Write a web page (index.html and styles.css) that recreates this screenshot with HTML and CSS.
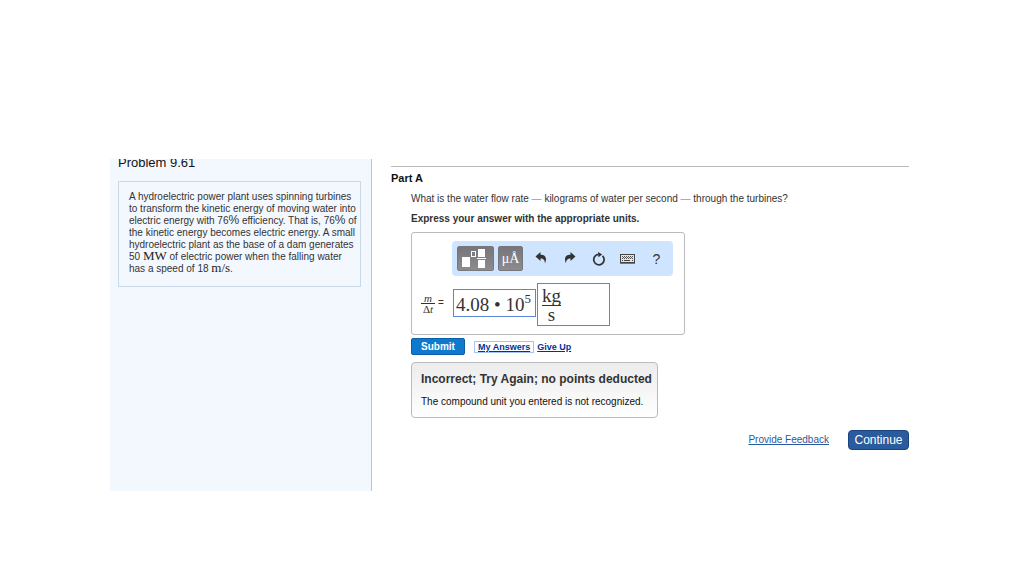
FILE: index.html
```html
<!DOCTYPE html>
<html lang="en">
<head>
  <meta charset="UTF-8">
  <meta name="viewport" content="width=device-width, initial-scale=1.0">
  <title>Problem 9.61</title>
  <link rel="stylesheet" href="styles.css">
</head>
<body>

  <div class="page">
    <!-- Problem statement -->
    <aside class="sidebar">
      <h1>Problem 9.61</h1>
      <div class="problem-text">
        A hydroelectric power plant uses spinning turbines<br>
        to transform the kinetic energy of moving water into<br>
        electric energy with 76<span class="percent">%</span> efficiency. That is, 76<span class="percent">%</span> of<br>
        the kinetic energy becomes electric energy. A small<br>
        hydroelectric plant as the base of a dam generates<br>
        50 <span class="unit">MW</span> of electric power when the falling water<br>
        has a speed of 18 <span class="unit">m/s</span>.
      </div>
    </aside>

    <main class="content">
      <h2>Part A</h2>

      <div class="part">
        <p class="question">What is the water flow rate <span class="dash">—</span> kilograms of water per second <span class="dash">—</span> through the turbines?</p>
        <p class="instructions">Express your answer with the appropriate units.</p>

        <div class="answer-box">
          <div class="toolbar">
            <button type="button" class="tool-btn templates" aria-label="Templates">
              <svg width="29" height="22" viewBox="0 0 29 22">
                <rect x="1" y="9" width="8" height="10" fill="#fff"/>
                <rect x="10.5" y="3.5" width="4" height="5" fill="none" stroke="#fff"/>
                <rect x="17" y="1" width="7" height="8" fill="#fff"/>
                <rect x="16" y="10" width="9" height="1" fill="#fff"/>
                <rect x="17" y="12" width="7" height="8" fill="#fff"/>
              </svg>
            </button>
            <button type="button" class="tool-btn units" aria-label="Units">μÅ</button>
            <button type="button" class="icon-btn" aria-label="Undo">
              <svg width="12" height="14" viewBox="0 0 12 14">
                <path d="M0.5 4.5 L5.5 0 V2.8 C10 2.8 12.5 5.5 10 11.5 C9.8 8 8.5 6.6 5.5 6.6 V9 Z" fill="#333"/>
              </svg>
            </button>
            <button type="button" class="icon-btn" aria-label="Redo">
              <svg width="12" height="14" viewBox="0 0 12 14">
                <path d="M11.5 4.5 L6.5 0 V2.8 C2 2.8 -0.5 5.5 2 11.5 C2.2 8 3.5 6.6 6.5 6.6 V9 Z" fill="#333"/>
              </svg>
            </button>
            <button type="button" class="icon-btn" aria-label="Reset">
              <svg width="14" height="14" viewBox="0 0 14 14">
                <path d="M10.5 3.8 A5.2 5.2 0 1 1 6.5 2.4" fill="none" stroke="#333" stroke-width="1.7"/>
                <path d="M6 0 L10.2 2.4 L6.4 5.2 Z" fill="#333"/>
              </svg>
            </button>
            <button type="button" class="icon-btn" aria-label="Keyboard">
              <svg width="15" height="10" viewBox="0 0 15 10">
                <rect x="0.5" y="0.5" width="14" height="8" fill="#dce6f0" stroke="#444"/>
                <path d="M2 2.5 H13 M3 3.5 H12 M2 4.5 H13" stroke="#555" stroke-dasharray="1 1"/>
                <path d="M2 6.5 H3 M4 6.5 H10 M12 6.5 H13" stroke="#444"/>
                <path d="M0 9.5 H15" stroke="#777"/>
              </svg>
            </button>
            <button type="button" class="icon-btn help" aria-label="Help">?</button>
          </div>

          <div class="answer-row">
            <span class="label-frac" id="answerLabel"><span class="num">m</span><span class="den">Δ<i>t</i></span></span>
            <span class="equals">=</span>
            <div class="math-field value" contenteditable="true" spellcheck="false" role="textbox" aria-labelledby="answerLabel">4.08 • 10<sup>5</sup></div>
            <div class="math-field units-field" contenteditable="true" spellcheck="false" role="textbox" aria-label="Units"><span class="num">kg</span><span class="den">s</span></div>
          </div>
        </div>

        <div class="actions">
          <button type="submit" class="submit-btn">Submit</button>
          <a href="#answers" class="my-answers">My Answers</a>
          <a href="#giveup">Give Up</a>
        </div>

        <div class="feedback">
          <h3>Incorrect; Try Again; no points deducted</h3>
          <p>The compound unit you entered is not recognized.</p>
        </div>
      </div>

      <div class="footer">
        <a href="#feedback">Provide Feedback</a>
        <button type="button" class="continue-btn">Continue</button>
      </div>
    </main>
  </div>

</body>
</html>
```

FILE: styles.css
```css
* {
  box-sizing: border-box;
}

body {
  margin: 0;
  background: #fff;
  color: #333;
  font-family: "Liberation Sans", Arial, sans-serif;
  font-size: 10px;
  line-height: 12px;
}

h1, h2, h3, p {
  margin: 0;
}

button {
  font-family: inherit;
  padding: 0;
  cursor: pointer;
}

.page {
  display: flex;
  margin: 159px 115px 0 110px;
}

.sidebar {
  flex: none;
  width: 262px;
  min-height: 332px;
  padding: 0 10px 0 8px;
  background: #f3f8ff;
  border-right: 1px solid #b4c6d8;
  overflow: hidden;
}

/* heading is scrolled partly out of view */
.sidebar h1 {
  margin: -4px 0 10px;
  font-size: 13px;
  font-weight: normal;
  line-height: 16px;
  color: #111;
}

.problem-text {
  padding: 9px 10px 11px;
  border: 1px solid #c9d9e8;
  white-space: nowrap;
}

.percent {
  font-size: 12px;
  line-height: 10px;
}

.unit {
  font-family: "Liberation Serif", serif;
  font-size: 13px;
  line-height: 10px;
  color: #222;
}

.content {
  flex: 1;
  margin: 7px 0 0 19px;
  border-top: 1px solid #bbb;
}

.content h2 {
  margin-top: 5px;
  font-size: 11px;
  line-height: 12px;
  color: #111;
}

.part {
  margin-left: 20px;
}

.question {
  margin-top: 9px;
}

.dash {
  color: #999;
}

.instructions {
  margin-top: 8px;
  font-weight: bold;
}

.answer-box {
  width: 274px;
  margin-top: 7px;
  padding: 8px;
  border: 1px solid #bbb;
  border-radius: 3px;
}

.toolbar {
  display: flex;
  align-items: center;
  width: 221px;
  height: 35px;
  margin-left: 32px;
  padding-left: 5px;
  background: #cfe5ff;
  border-radius: 4px;
}

.tool-btn {
  display: flex;
  flex: none;
  align-items: center;
  justify-content: center;
  height: 25px;
  border: 1px solid #77777b;
  border-radius: 2px;
  background: linear-gradient(#75757a, #8b8b90);
  color: #fff;
}

.templates {
  width: 37px;
}

.units {
  width: 25px;
  margin: 0 3px 0 4px;
  font-family: "Liberation Serif", serif;
  font-size: 14px;
}

.icon-btn {
  display: flex;
  flex: none;
  align-items: center;
  justify-content: center;
  width: 29px;
  height: 25px;
  border: 0;
  background: none;
  color: #333;
}

.help {
  font-size: 14px;
}

.answer-row {
  display: flex;
  align-items: center;
  margin-top: 7px;
  font-family: "Liberation Serif", serif;
}

.label-frac {
  width: 14px;
  margin: 0 0 3px 1px;
  text-align: center;
  font-size: 11px;
  line-height: 10px;
}

.num, .den {
  display: block;
}

.label-frac .num {
  border-bottom: 1px solid #333;
  font-style: italic;
}

.equals {
  width: 18px;
  margin-bottom: 3px;
  padding-left: 3px;
  font-family: "Liberation Sans", Arial, sans-serif;
}

.math-field {
  border: 1px solid #5b86d8;
  background: #fff;
  font-size: 19px;
  color: #333;
  white-space: nowrap;
  outline: none;
}

.value {
  width: 83px;
  height: 28px;
  margin: 0 1px 3px 0;
  padding-left: 2px;
  line-height: 29px;
}

.value sup {
  font-size: 13px;
  line-height: 0;
  vertical-align: 8px;
}

.units-field {
  width: 73px;
  height: 43px;
  padding: 3px 4px;
}

.units-field .num, .units-field .den {
  width: 19px;
  text-align: center;
  line-height: 18px;
}

.units-field .num {
  border-bottom: 1px solid #333;
}

.actions {
  display: flex;
  align-items: center;
  margin-top: 3px;
  font-size: 9px;
  font-weight: bold;
}

a {
  color: #039;
}

.submit-btn {
  width: 54px;
  height: 17px;
  margin-right: 9px;
  border: 1px solid #0b5fa5;
  border-radius: 2px;
  background: #0f7acd;
  color: #fff;
  font-size: 10px;
  font-weight: bold;
}

.my-answers {
  margin-right: 3px;
  padding: 0 3px;
  border: 1px solid #a5c6f5;
  line-height: 10px;
}

.feedback {
  width: 247px;
  margin-top: 7px;
  padding: 9px;
  border: 1px solid #bbb;
  border-radius: 4px;
  background: linear-gradient(#ececec, #fff);
  color: #111;
  white-space: nowrap;
}

.feedback h3 {
  margin-bottom: 8px;
  font-size: 12px;
  line-height: 15px;
  color: #333;
}

.feedback p {
  line-height: 13px;
}

.footer {
  display: flex;
  align-items: center;
  justify-content: flex-end;
  gap: 19px;
  margin-top: 12px;
}

.footer a {
  color: #2a5a9b;
}

.continue-btn {
  width: 61px;
  height: 20px;
  border: 1px solid #1c4480;
  border-radius: 4px;
  background: #2a5b9c;
  color: #fff;
  font-size: 12px;
}
```
